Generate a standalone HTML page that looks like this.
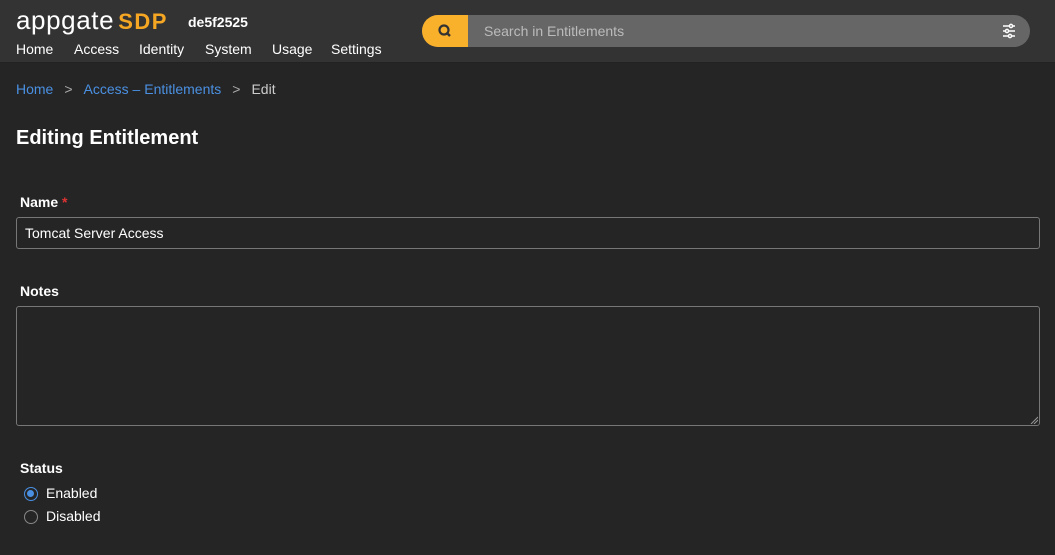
<!DOCTYPE html>
<html><head><style>
*{box-sizing:border-box;margin:0;padding:0}
body{width:1055px;height:555px;background:#252525;font-family:"Liberation Sans",Arial,sans-serif;color:#fff;overflow:hidden;position:relative}
.hdr{position:absolute;left:0;top:0;width:1055px;height:63px;background:#333;border-bottom:1px solid #222}
.logo{position:absolute;left:16px;top:5px;font-size:26px;letter-spacing:0.6px;color:#fff}
.logo b{color:#f5a623;font-weight:bold;letter-spacing:1.5px;font-size:22px;margin-left:4px}
.host{position:absolute;left:188px;top:14px;font-size:14px;font-weight:bold}
.nav{position:absolute;left:16px;top:41px;font-size:14px}
.nav span{position:absolute;white-space:nowrap}
.search{position:absolute;left:422px;top:15px;width:608px;height:32px;border-radius:16px;background:#666;overflow:hidden}
.sbtn{position:absolute;left:0;top:0;width:46px;height:32px;background:#f9b02b}
.sph{position:absolute;left:62px;top:8px;font-size:14px;color:#bbb}
.bc{position:absolute;left:16px;top:81px;font-size:14px;color:#4a90e2;white-space:nowrap}
.bc .g{color:#aaa;margin:0 11px}
.bc .e{color:#ccc}
h1{position:absolute;left:16px;top:127px;font-size:20px;font-weight:bold}
.lbl{position:absolute;left:20px;font-size:14px;font-weight:bold}
.inp{position:absolute;left:16px;width:1024px;border:1px solid #777;border-radius:3px;background:#252525}
.val{position:absolute;left:25px;top:225px;font-size:14px}
.rad{position:absolute;left:24px;width:14px;height:14px;border-radius:50%;border:1.5px solid #888}
.rl{position:absolute;left:46px;font-size:14px}
</style></head><body>
<div class="hdr">
<div class="logo">appgate<b>SDP</b></div>
<div class="host">de5f2525</div>
<div class="nav"><span style="left:0">Home</span><span style="left:58px">Access</span><span style="left:123px">Identity</span><span style="left:189px">System</span><span style="left:256px">Usage</span><span style="left:315px">Settings</span></div>
<div class="search"><div class="sbtn"><svg width="46" height="32"><circle cx="22" cy="15" r="4.5" fill="none" stroke="#333" stroke-width="2.2"/><line x1="25" y1="18" x2="28" y2="21" stroke="#333" stroke-width="2.4"/></svg></div>
<div class="sph">Search in Entitlements</div>
<svg style="position:absolute;left:579px;top:8px" width="16" height="16"><g stroke="#fff" stroke-width="1.5" fill="#666"><line x1="2" y1="3" x2="14" y2="3"/><line x1="2" y1="8" x2="14" y2="8"/><line x1="2" y1="13" x2="14" y2="13"/><circle cx="10" cy="3" r="1.6"/><circle cx="6" cy="8" r="1.6"/><circle cx="9" cy="13" r="1.6"/></g></svg>
</div>
</div>
<div class="bc">Home<span class="g">&gt;</span>Access – Entitlements<span class="g">&gt;</span><span class="e">Edit</span></div>
<h1>Editing Entitlement</h1>
<div class="lbl" style="top:194px">Name <span style="color:#d33">*</span></div>
<div class="inp" style="top:217px;height:32px"></div>
<div class="val">Tomcat Server Access</div>
<div class="lbl" style="top:283px">Notes</div>
<div class="inp" style="top:306px;height:120px"></div>
<svg style="position:absolute;left:1030px;top:416px" width="8" height="8"><g stroke="#999" stroke-width="1"><line x1="1" y1="8" x2="8" y2="1"/><line x1="4" y1="8" x2="8" y2="4"/></g></svg>
<div class="lbl" style="top:460px">Status</div>
<div class="rad" style="top:487px;border-color:#4a90e2"><div style="position:absolute;left:2px;top:2px;width:7px;height:7px;border-radius:50%;background:#4a90e2"></div></div>
<div class="rl" style="top:485px">Enabled</div>
<div class="rad" style="top:510px"></div>
<div class="rl" style="top:508px">Disabled</div>
</body></html>
